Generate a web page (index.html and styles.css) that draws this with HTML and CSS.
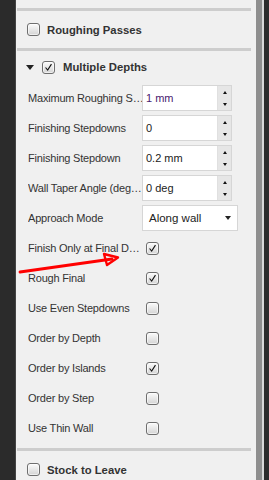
FILE: index.html
```html
<!DOCTYPE html>
<html>
<head>
<meta charset="utf-8">
<link rel="stylesheet" href="styles.css">
</head>
<body>
<div class="frame">
  <div class="gutter"></div>
  <div class="panel">
    <div class="sep first"></div>
    <div class="head"><span class="cb"></span><span class="htext">Roughing Passes</span></div>
    <div class="sep"></div>
    <div class="head sub"><span class="tri"></span><span class="cb on"><svg viewBox="0 0 13 13"><path d="M3 6.5 L5.5 9.5 L10 2.5" fill="none" stroke="#111" stroke-width="1.3"/></svg></span><span class="htext">Multiple Depths</span></div>
    <div class="rows">
      <div class="row"><span class="lbl">Maximum Roughing Stepdown</span><div class="field"><span class="val purple">1 mm</span><span class="spin"><i class="up"></i><i class="dn"></i></span></div></div>
      <div class="row"><span class="lbl">Finishing Stepdowns</span><div class="field"><span class="val">0</span><span class="spin"><i class="up"></i><i class="dn"></i></span></div></div>
      <div class="row"><span class="lbl">Finishing Stepdown</span><div class="field"><span class="val">0.2 mm</span><span class="spin"><i class="up"></i><i class="dn"></i></span></div></div>
      <div class="row"><span class="lbl">Wall Taper Angle (degrees)</span><div class="field"><span class="val">0 deg</span><span class="spin"><i class="up"></i><i class="dn"></i></span></div></div>
      <div class="row"><span class="lbl">Approach Mode</span><div class="field select"><span class="val">Along wall</span><i class="caret"></i></div></div>
      <div class="row"><span class="lbl">Finish Only at Final Depth</span><span class="cb on"><svg viewBox="0 0 13 13"><path d="M3 6.5 L5.5 9.5 L10 2.5" fill="none" stroke="#111" stroke-width="1.3"/></svg></span></div>
      <div class="row"><span class="lbl">Rough Final</span><span class="cb on"><svg viewBox="0 0 13 13"><path d="M3 6.5 L5.5 9.5 L10 2.5" fill="none" stroke="#111" stroke-width="1.3"/></svg></span></div>
      <div class="row"><span class="lbl">Use Even Stepdowns</span><span class="cb"></span></div>
      <div class="row"><span class="lbl">Order by Depth</span><span class="cb"></span></div>
      <div class="row"><span class="lbl">Order by Islands</span><span class="cb on"><svg viewBox="0 0 13 13"><path d="M3 6.5 L5.5 9.5 L10 2.5" fill="none" stroke="#111" stroke-width="1.3"/></svg></span></div>
      <div class="row"><span class="lbl">Order by Step</span><span class="cb"></span></div>
      <div class="row"><span class="lbl">Use Thin Wall</span><span class="cb"></span></div>
    </div>
    <div class="sep"></div>
    <div class="head"><span class="cb"></span><span class="htext">Stock to Leave</span></div>
  </div>
  <div class="scroll"><div class="thumb"></div><div class="track"></div></div>
  <div class="edge"></div>
</div>
<svg class="arrow" width="269" height="480" viewBox="0 0 269 480">
  <path d="M20 272 L112 259" fill="none" stroke="#f00" stroke-width="2.8" stroke-linecap="round"/>
  <path d="M104 254 L118 257.5 L107 265 Z" fill="none" stroke="#f00" stroke-width="2.4" stroke-linejoin="round"/>
</svg>
</body>
</html>
```
FILE: styles.css
```css
html, body { margin: 0; padding: 0; }
body {
  width: 269px;
  height: 480px;
  overflow: hidden;
  background: #2b2b2b;
  font-family: "Liberation Sans", Arial, sans-serif;
  position: relative;
}
.frame { display: flex; height: 480px; overflow: hidden; }
.gutter { width: 15px; background: #2b2b2b; border-right: 1px solid #444; }
.panel {
  width: 240px;
  background: #f0f0f0;
  display: flex;
  flex-direction: column;
  overflow: hidden;
}
.panel > * { flex-shrink: 0; }
.sep {
  height: 3px;
  background: #cdcdcd;
  margin: 0 5px 0 1px;
}
.sep.first { margin-top: 8px; }
.rows + .sep { margin-top: 5px; }
.head {
  height: 37px;
  display: flex;
  align-items: center;
  padding-left: 11px;
  gap: 7px;
}
.head.sub { height: 32px; padding-left: 10px; gap: 8px; }
.htext { font-weight: bold; font-size: 11.3px; color: #333; }
.tri {
  width: 0; height: 0;
  border-left: 4px solid transparent;
  border-right: 4px solid transparent;
  border-top: 5px solid #222;
}
.cb {
  width: 11px; height: 11px;
  border: 1px solid #6e6e6e;
  border-radius: 3px;
  background: linear-gradient(#fbfbfb, #d4d4d4);
  box-shadow: inset 0 0 0 1px rgba(255,255,255,0.6);
  display: inline-flex;
  flex: none;
}
.cb svg { width: 11px; height: 11px; }
.rows { display: flex; flex-direction: column; }
.row {
  height: 30px;
  flex-shrink: 0;
  display: flex;
  align-items: center;
  padding-left: 12px;
}
.lbl {
  width: 117px;
  margin-right: -3px;
  flex: none;
  font-size: 11px;
  letter-spacing: -0.2px;
  color: #333;
  white-space: nowrap;
  overflow: hidden;
  text-overflow: ellipsis;
}
.row .cb { margin-left: 4px; }
.field {
  width: 88px;
  height: 24px;
  background: #fff;
  border: 1px solid #d6d6d6;
  display: flex;
  align-items: center;
}
.val { flex: 1; padding-left: 3px; font-size: 11px; color: #222; }
.val.purple { color: #4a2070; }
.spin {
  width: 13px;
  height: 24px;
  background: #e6e6e6;
  display: flex;
  flex-direction: column;
  align-items: center;
  justify-content: space-around;
  border-left: 1px solid #e0e0e0;
}
.spin i { width: 0; height: 0; border-left: 2.5px solid transparent; border-right: 2.5px solid transparent; }
.spin .up { border-bottom: 3px solid #111; }
.spin .dn { border-top: 3px solid #111; }
.select { padding-right: 6px; }
.select .val { padding-left: 6px; font-size: 11.5px; }
.caret { width: 0; height: 0; border-left: 3.5px solid transparent; border-right: 3.5px solid transparent; border-top: 4px solid #222; }
.scroll { width: 8px; display: flex; }
.thumb { width: 6px; background: #8e8e8e; }
.track { width: 2px; background: #d8d8d8; }
.edge { flex: 1; background: #2b2b2b; }
.arrow { position: absolute; left: 0; top: 0; pointer-events: none; }
```
